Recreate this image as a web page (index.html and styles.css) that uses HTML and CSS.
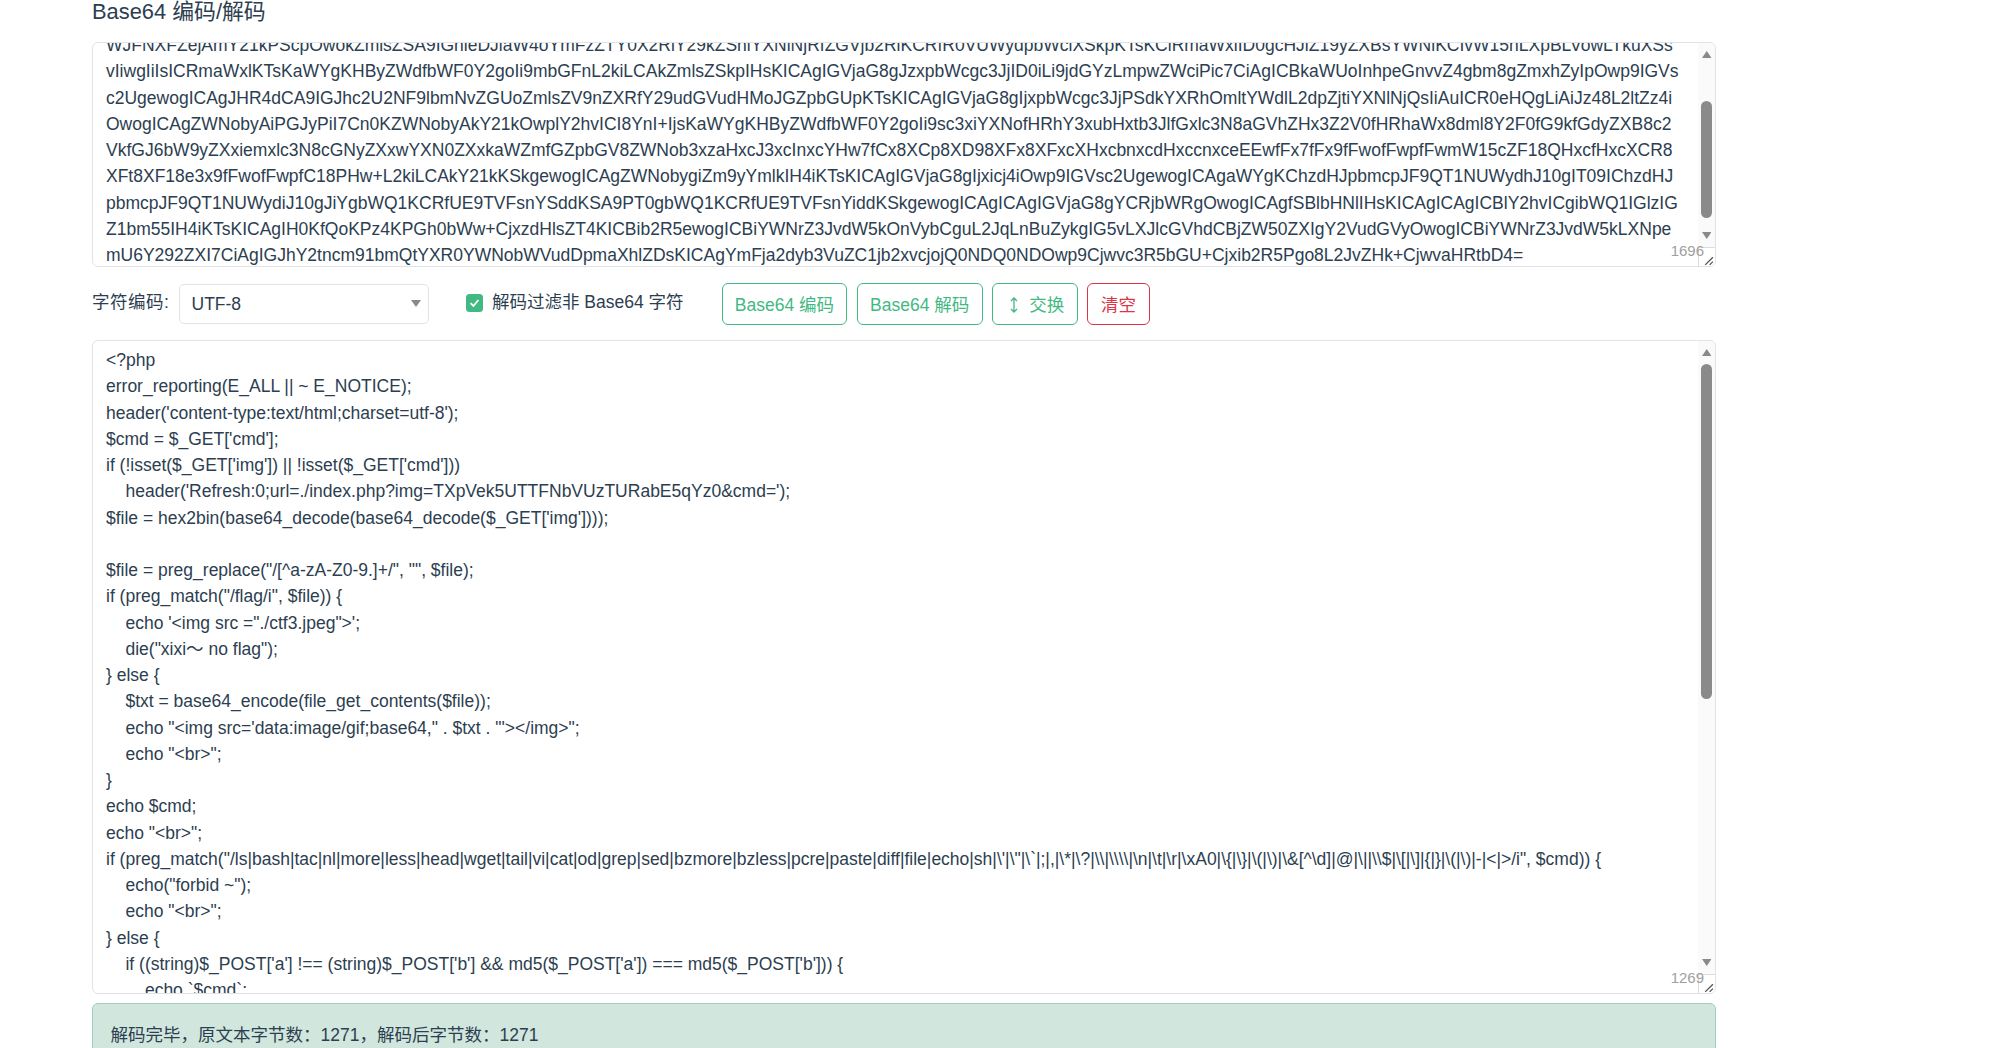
FILE: index.html
```html
<!DOCTYPE html>
<html lang="zh-CN">
<head>
<meta charset="utf-8">
<title>Base64 编码/解码</title>
<link rel="stylesheet" href="styles.css">
</head>
<body>
<main class="page">
<h1 class="title">Base64 编码/解码</h1>
<section class="panel panel-b64">
<pre class="code code-b64">WJFNXFZejAmY21kPScpOwokZmlsZSA9IGhleDJiaW4oYmFzZTY0X2RlY29kZShiYXNlNjRfZGVjb2RlKCRfR0VUWydpbWciXSkpKTsKCiRmaWxlID0gcHJlZ19yZXBsYWNlKCIvW15hLXpBLVowLTkuXSs
vIiwgIiIsICRmaWxlKTsKaWYgKHByZWdfbWF0Y2goIi9mbGFnL2kiLCAkZmlsZSkpIHsKICAgIGVjaG8gJzxpbWcgc3JjID0iLi9jdGYzLmpwZWciPic7CiAgICBkaWUoInhpeGnvvZ4gbm8gZmxhZyIpOwp9IGVs
c2UgewogICAgJHR4dCA9IGJhc2U2NF9lbmNvZGUoZmlsZV9nZXRfY29udGVudHMoJGZpbGUpKTsKICAgIGVjaG8gIjxpbWcgc3JjPSdkYXRhOmltYWdlL2dpZjtiYXNlNjQsIiAuICR0eHQgLiAiJz48L2ltZz4i
OwogICAgZWNobyAiPGJyPiI7Cn0KZWNobyAkY21kOwplY2hvICI8YnI+IjsKaWYgKHByZWdfbWF0Y2goIi9sc3xiYXNofHRhY3xubHxtb3JlfGxlc3N8aGVhZHx3Z2V0fHRhaWx8dml8Y2F0fG9kfGdyZXB8c2
VkfGJ6bW9yZXxiemxlc3N8cGNyZXxwYXN0ZXxkaWZmfGZpbGV8ZWNob3xzaHxcJ3xcInxcYHw7fCx8XCp8XD98XFx8XFxcXHxcbnxcdHxccnxceEEwfFx7fFx9fFwofFwpfFwmW15cZF18QHxcfHxcXCR8
XFt8XF18e3x9fFwofFwpfC18PHw+L2kiLCAkY21kKSkgewogICAgZWNobygiZm9yYmlkIH4iKTsKICAgIGVjaG8gIjxicj4iOwp9IGVsc2UgewogICAgaWYgKChzdHJpbmcpJF9QT1NUWydhJ10gIT09IChzdHJ
pbmcpJF9QT1NUWydiJ10gJiYgbWQ1KCRfUE9TVFsnYSddKSA9PT0gbWQ1KCRfUE9TVFsnYiddKSkgewogICAgICAgIGVjaG8gYCRjbWRgOwogICAgfSBlbHNlIHsKICAgICAgICBlY2hvICgibWQ1IGlzIG
Z1bm55IH4iKTsKICAgIH0KfQoKPz4KPGh0bWw+CjxzdHlsZT4KICBib2R5ewogICBiYWNrZ3JvdW5kOnVybCguL2JqLnBuZykgIG5vLXJlcGVhdCBjZW50ZXIgY2VudGVyOwogICBiYWNrZ3JvdW5kLXNpe
mU6Y292ZXI7CiAgIGJhY2tncm91bmQtYXR0YWNobWVudDpmaXhlZDsKICAgYmFja2dyb3VuZC1jb2xvcjojQ0NDQ0NDOwp9Cjwvc3R5bGU+Cjxib2R5Pgo8L2JvZHk+CjwvaHRtbD4=</pre>
<div class="scrollbar">
<svg class="arrow" viewBox="0 0 10 8" preserveAspectRatio="none"><path d="M5 0 10 8H0Z"/></svg>
<div class="track"><div class="thumb thumb-b64"></div></div>
<svg class="arrow" viewBox="0 0 10 8" preserveAspectRatio="none"><path d="M0 0H10L5 8Z"/></svg>
</div>
<div class="corner">
<span class="count">1696</span>
<svg class="grip" viewBox="0 0 10 10"><path d="M2 9 9 2M6 9 9 6"/></svg>
</div>
</section>

<form class="toolbar">
<label class="field-label">字符编码:</label>
<div class="select"><span class="select-value">UTF-8</span><i class="caret"></i></div>
<label class="check">
<svg class="box" viewBox="0 0 17 18"><rect width="17" height="18" rx="3.5"/><path d="M4.6 9.2 7.4 12 12.4 6"/></svg>
<span>解码过滤非 Base64 字符</span>
</label>
<div class="buttons">
<button type="button" class="btn">Base64 编码</button>
<button type="button" class="btn">Base64 解码</button>
<button type="button" class="btn"><svg class="swap" viewBox="0 0 10 16"><path d="M5 1V15M2 4 5 1 8 4M2 12 5 15 8 12"/></svg>交换</button>
<button type="button" class="btn btn-danger">清空</button>
</div>
</form>

<section class="panel panel-src">
<pre class="code code-src">&lt;?php
error_reporting(E_ALL || ~ E_NOTICE);
header('content-type:text/html;charset=utf-8');
$cmd = $_GET['cmd'];
if (!isset($_GET['img']) || !isset($_GET['cmd']))
    header('Refresh:0;url=./index.php?img=TXpVek5UTTFNbVUzTURabE5qYz0&amp;cmd=');
$file = hex2bin(base64_decode(base64_decode($_GET['img'])));

$file = preg_replace("/[^a-zA-Z0-9.]+/", "", $file);
if (preg_match("/flag/i", $file)) {
    echo '&lt;img src ="./ctf3.jpeg"&gt;';
    die("xixi～ no flag");
} else {
    $txt = base64_encode(file_get_contents($file));
    echo "&lt;img src='data:image/gif;base64," . $txt . "'&gt;&lt;/img&gt;";
    echo "&lt;br&gt;";
}
echo $cmd;
echo "&lt;br&gt;";
if (preg_match("/ls|bash|tac|nl|more|less|head|wget|tail|vi|cat|od|grep|sed|bzmore|bzless|pcre|paste|diff|file|echo|sh|\'|\"|\`|;|,|\*|\?|\\|\\\\|\n|\t|\r|\xA0|\{|\}|\(|\)|\&amp;[^\d]|@|\||\\$|\[|\]|{|}|\(|\)|-|&lt;|&gt;/i", $cmd)) {
    echo("forbid ~");
    echo "&lt;br&gt;";
} else {
    if ((string)$_POST['a'] !== (string)$_POST['b'] &amp;&amp; md5($_POST['a']) === md5($_POST['b'])) {
        echo `$cmd`;</pre>
<div class="scrollbar">
<svg class="arrow" viewBox="0 0 10 8" preserveAspectRatio="none"><path d="M5 0 10 8H0Z"/></svg>
<div class="track"><div class="thumb thumb-src"></div></div>
<svg class="arrow" viewBox="0 0 10 8" preserveAspectRatio="none"><path d="M0 0H10L5 8Z"/></svg>
</div>
<div class="corner">
<span class="count">1269</span>
<svg class="grip" viewBox="0 0 10 10"><path d="M2 9 9 2M6 9 9 6"/></svg>
</div>
</section>

<div class="alert">解码完毕，原文本字节数：1271，解码后字节数：1271</div>
</main>
</body>
</html>
```
FILE: styles.css
```css
* { box-sizing: border-box; }
html, body {
  margin: 0;
  height: 1048px;
  overflow: hidden;
  background: #fff;
}
body {
  color: #2c3e50;
  font-family: "Liberation Sans", "Noto Sans CJK SC", sans-serif;
  font-size: 17.5px;
  line-height: 26.25px;
}
.page {
  width: 1624px;
  margin-left: 92px;
}
.title {
  margin: -1px 0 17px;
  height: 26px;
  font-size: 21.875px;
  font-weight: 400;
  line-height: 26px;
}
.panel {
  position: relative;
  overflow: hidden;
  background: #fff;
  border: 1.25px solid #e2e3e8;
  border-radius: 6px;
}
.panel-b64 { height: 225px; }
.panel-src { height: 654px; }
.code {
  margin: 0;
  padding: 0 13px;
  font: inherit;
  white-space: pre;
}
.code-b64 { margin-top: -11px; }
.code-src { padding-top: 6px; }

/* scrollbar and resize corner drawn over each text panel */
.scrollbar {
  position: absolute;
  top: 0;
  right: 0;
  bottom: 19px;
  width: 17.5px;
  display: flex;
  flex-direction: column;
  align-items: center;
  padding: 8px 0 8px;
  background: #fafafa;
}
.arrow {
  flex: none;
  width: 9.5px;
  height: 7px;
  fill: #8a8a8a;
}
.track {
  flex: 1;
  width: 11px;
}
.thumb {
  width: 11px;
  background: #8a8a8a;
  border-radius: 6px;
}
.thumb-b64 { height: 117px; margin-top: 43px; }
.thumb-src { height: 335px; margin-top: 8px; }
.corner {
  position: absolute;
  right: 0;
  bottom: 0;
  width: 17.5px;
  height: 19.5px;
  border-left: 1.25px solid #dcdcdc;
  border-top: 1.25px solid #dcdcdc;
  background: #fff;
}
.count {
  position: absolute;
  right: 11px;
  top: -7px;
  color: #a0a0a0;
  font-size: 15px;
  line-height: 20px;
}
.grip {
  position: absolute;
  right: 1px;
  bottom: 0;
  width: 11px;
  height: 11px;
  fill: none;
  stroke: #555;
  stroke-width: 1.2;
}

.toolbar {
  display: flex;
  align-items: center;
  height: 41px;
  margin: 16px 0;
}
.field-label {
  width: 87px;
  margin-top: -3px;
  letter-spacing: 0.5px;
}
.select {
  display: flex;
  align-items: center;
  justify-content: space-between;
  width: 250px;
  height: 40px;
  padding: 0 7px 0 11.5px;
  border: 1.25px solid #e2e3e8;
  border-radius: 5px;
}
.select-value { padding-top: 1px; }
.caret {
  width: 0;
  height: 0;
  border-left: 5px solid transparent;
  border-right: 5px solid transparent;
  border-top: 7px solid #8a8a8a;
}
.check {
  display: flex;
  align-items: center;
  gap: 9px;
  margin-left: 37px;
  margin-top: -2px;
}
.box {
  width: 17px;
  height: 18px;
}
.box rect { fill: #42b983; }
.box path {
  fill: none;
  stroke: #fff;
  stroke-width: 1.8;
}
.buttons {
  display: flex;
  align-self: flex-start;
  gap: 9.5px;
  margin-left: 38px;
}
.btn {
  display: flex;
  align-items: center;
  height: 41.5px;
  padding: 2px 12.25px 0;
  background: #fff;
  border: 1.25px solid #42b983;
  border-radius: 6px;
  color: #42b983;
  font: inherit;
  white-space: nowrap;
}
.btn-danger {
  border-color: #dc3545;
  color: #dc3545;
  padding: 2px 13px 0;
}
.swap {
  width: 10px;
  height: 16px;
  margin: 0 10px 0 4px;
  fill: none;
  stroke: #42b983;
  stroke-width: 1.3;
}
.alert {
  height: 120px;
  margin-top: 9px;
  padding: 18px 17.5px;
  background: #d1e7dd;
  border: 1.25px solid #a3cfbb;
  border-radius: 6px;
}
```
